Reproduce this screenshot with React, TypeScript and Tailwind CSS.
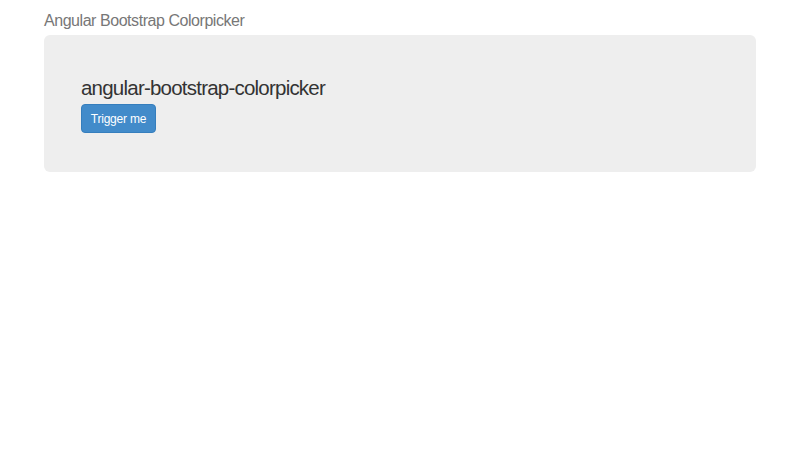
export default function App() {
  return (
    <div className="min-h-[450px] bg-white px-[44px] font-['Liberation_Sans',Arial,sans-serif]">
      <div className="h-[35px] pt-[11px] text-[16px] leading-[20px] tracking-[-0.45px] text-[#777]">
        Angular Bootstrap Colorpicker
      </div>
      <div className="w-[712px] rounded-[6px] bg-[#eee] px-[37px] pt-[41px] pb-[39px]">
        <h1 className="text-[20.5px] leading-[24px] tracking-[-0.78px] text-[#333]">
          angular-bootstrap-colorpicker
        </h1>
        <button
          type="button"
          className="mt-[4px] flex h-[29px] w-[75px] items-center justify-center rounded-[4px] border border-[#357ebd] bg-[#428bca] text-[12px] tracking-[-0.2px] text-white"
        >
          Trigger me
        </button>
      </div>
    </div>
  );
}
